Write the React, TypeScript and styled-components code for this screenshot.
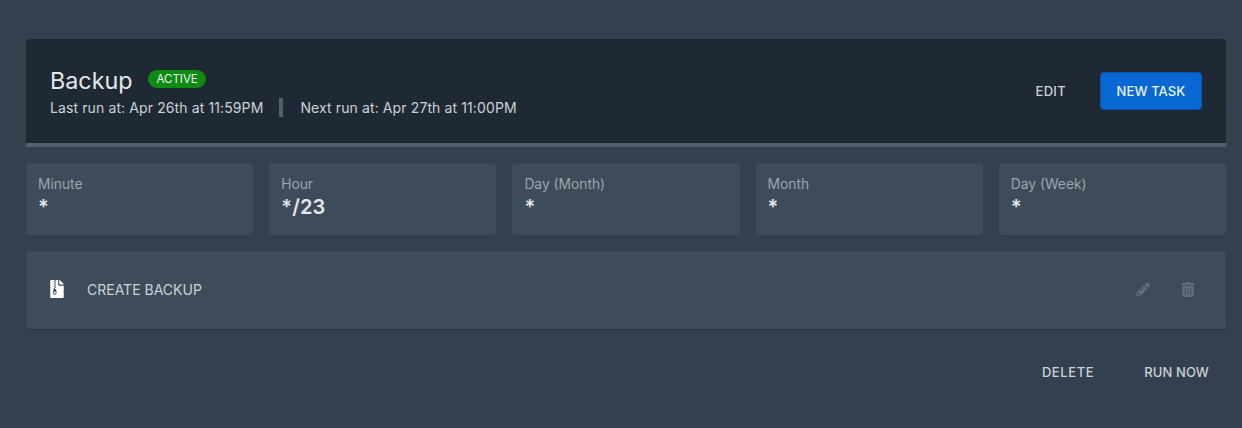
import React from "react";
import styled, { createGlobalStyle } from "styled-components";
import { FaFileArchive, FaPencilAlt, FaTrashAlt } from "react-icons/fa";

const Global = createGlobalStyle`
  html, body { margin: 0; padding: 0; background: #33404d; }
  body { font-family: Inter, "Liberation Sans", sans-serif; height: 428px; overflow: hidden; }
  #root { height: 428px; }
`;

const Page = styled.div`
  padding: 39px 16px 0 26px;
  width: 1200px;
`;

const Header = styled.header`
  height: 104px;
  box-sizing: content-box;
  background: #1f2933;
  border-bottom: 4px solid #52606d;
  border-radius: 4px 4px 0 0;
  padding: 0 24px;
  display: flex;
  align-items: center;
  justify-content: space-between;
`;

const TitleBlock = styled.div`
  display: flex;
  flex-direction: column;
  gap: 1px;
`;

const TitleRow = styled.div`
  display: flex;
  align-items: center;
  gap: 16px;
  height: 32px;
`;

const Title = styled.h3`
  margin: 0;
  font-size: 23.3px;
  font-weight: 400;
  color: #e4e7eb;
`;

const Badge = styled.span`
  background: #0f8a13;
  color: #e3f9e5;
  font-size: 11.5px;
  line-height: 18px;
  height: 18px;
  padding: 0 8px;
  border-radius: 9px;
  position: relative;
  top: -2px;
`;

const RunRow = styled.div`
  display: flex;
  align-items: center;
  font-size: 14px;
  letter-spacing: 0.11px;
  color: #cbd2d9;
  height: 20px;
`;

const RunDivider = styled.span`
  width: 4px;
  height: 19px;
  background: #52606d;
  margin: 0 17px 0 16px;
`;

const Actions = styled.div`
  display: flex;
  align-items: center;
  gap: 18px;
`;

const TextButton = styled.button<{ $spacing?: number }>`
  background: none;
  border: 0;
  padding: 0 16px;
  height: 38px;
  font: 500 13px Inter, "Liberation Sans", sans-serif;
  letter-spacing: ${(p) => p.$spacing ?? 0.3}px;
  color: #cbd2d9;
`;

const PrimaryButton = styled.button`
  background: #0967d2;
  border: 1px solid #0552b5;
  border-radius: 4px;
  width: 102px;
  height: 38px;
  padding: 0;
  font: 500 13px Inter, "Liberation Sans", sans-serif;
  letter-spacing: 0.1px;
  color: #e6f6ff;
`;

const CronGrid = styled.div`
  display: grid;
  grid-template-columns: repeat(5, 1fr);
  gap: 16px;
  margin-top: 16px;
`;

const CronCard = styled.div`
  height: 72px;
  box-sizing: border-box;
  background: #3e4c59;
  border-radius: 4px;
  padding: 13px 12px;
`;

const CronLabel = styled.p`
  margin: 0;
  font-size: 13.8px;
  line-height: 16px;
  color: #9aa5b1;
`;

const CronValue = styled.p`
  margin: 3px 0 0;
  font-size: 20px;
  line-height: 24px;
  font-weight: 600;
  letter-spacing: 0.2px;
  color: #e4e7eb;
`;

const TaskRow = styled.div`
  margin-top: 16px;
  height: 78px;
  box-sizing: border-box;
  background: #3e4c59;
  border-radius: 0 0 4px 4px;
  box-shadow: 0 1px 2px rgba(0, 0, 0, 0.25);
  display: flex;
  align-items: center;
  padding: 0 24px 2px;
`;

const ArchiveIcon = styled(FaFileArchive)`
  width: 14px;
  height: 18px;
  color: #fff;
  margin-right: 23px;
`;

const TaskName = styled.span`
  flex: 1;
  font-size: 14px;
  color: #cbd2d9;
`;

const MutedIcons = styled.div`
  display: flex;
  align-items: center;
  gap: 31px;
  padding-right: 7px;
  color: #616e7c;
  svg { width: 14px; height: 15px; display: block; }
`;

const Footer = styled.div`
  display: flex;
  justify-content: flex-end;
  gap: 18px;
  margin-top: 24px;
  padding-right: 1px;
`;

export default function App() {
  const cron = [
    ["Minute", "*"],
    ["Hour", "*/23"],
    ["Day (Month)", "*"],
    ["Month", "*"],
    ["Day (Week)", "*"],
  ];
  return (
    <>
      <Global />
      <Page>
        <Header>
          <TitleBlock>
            <TitleRow>
              <Title>Backup</Title>
              <Badge>ACTIVE</Badge>
            </TitleRow>
            <RunRow>
              <span>Last run at: Apr 26th at 11:59PM</span>
              <RunDivider />
              <span>Next run at: Apr 27th at 11:00PM</span>
            </RunRow>
          </TitleBlock>
          <Actions>
            <TextButton>EDIT</TextButton>
            <PrimaryButton>NEW TASK</PrimaryButton>
          </Actions>
        </Header>
        <CronGrid>
          {cron.map(([label, value]) => (
            <CronCard key={label}>
              <CronLabel>{label}</CronLabel>
              <CronValue>{value}</CronValue>
            </CronCard>
          ))}
        </CronGrid>
        <TaskRow>
          <ArchiveIcon />
          <TaskName>CREATE BACKUP</TaskName>
          <MutedIcons>
            <FaPencilAlt />
            <FaTrashAlt />
          </MutedIcons>
        </TaskRow>
        <Footer>
          <TextButton $spacing={0.6}>DELETE</TextButton>
          <TextButton $spacing={0.1}>RUN NOW</TextButton>
        </Footer>
      </Page>
    </>
  );
}
